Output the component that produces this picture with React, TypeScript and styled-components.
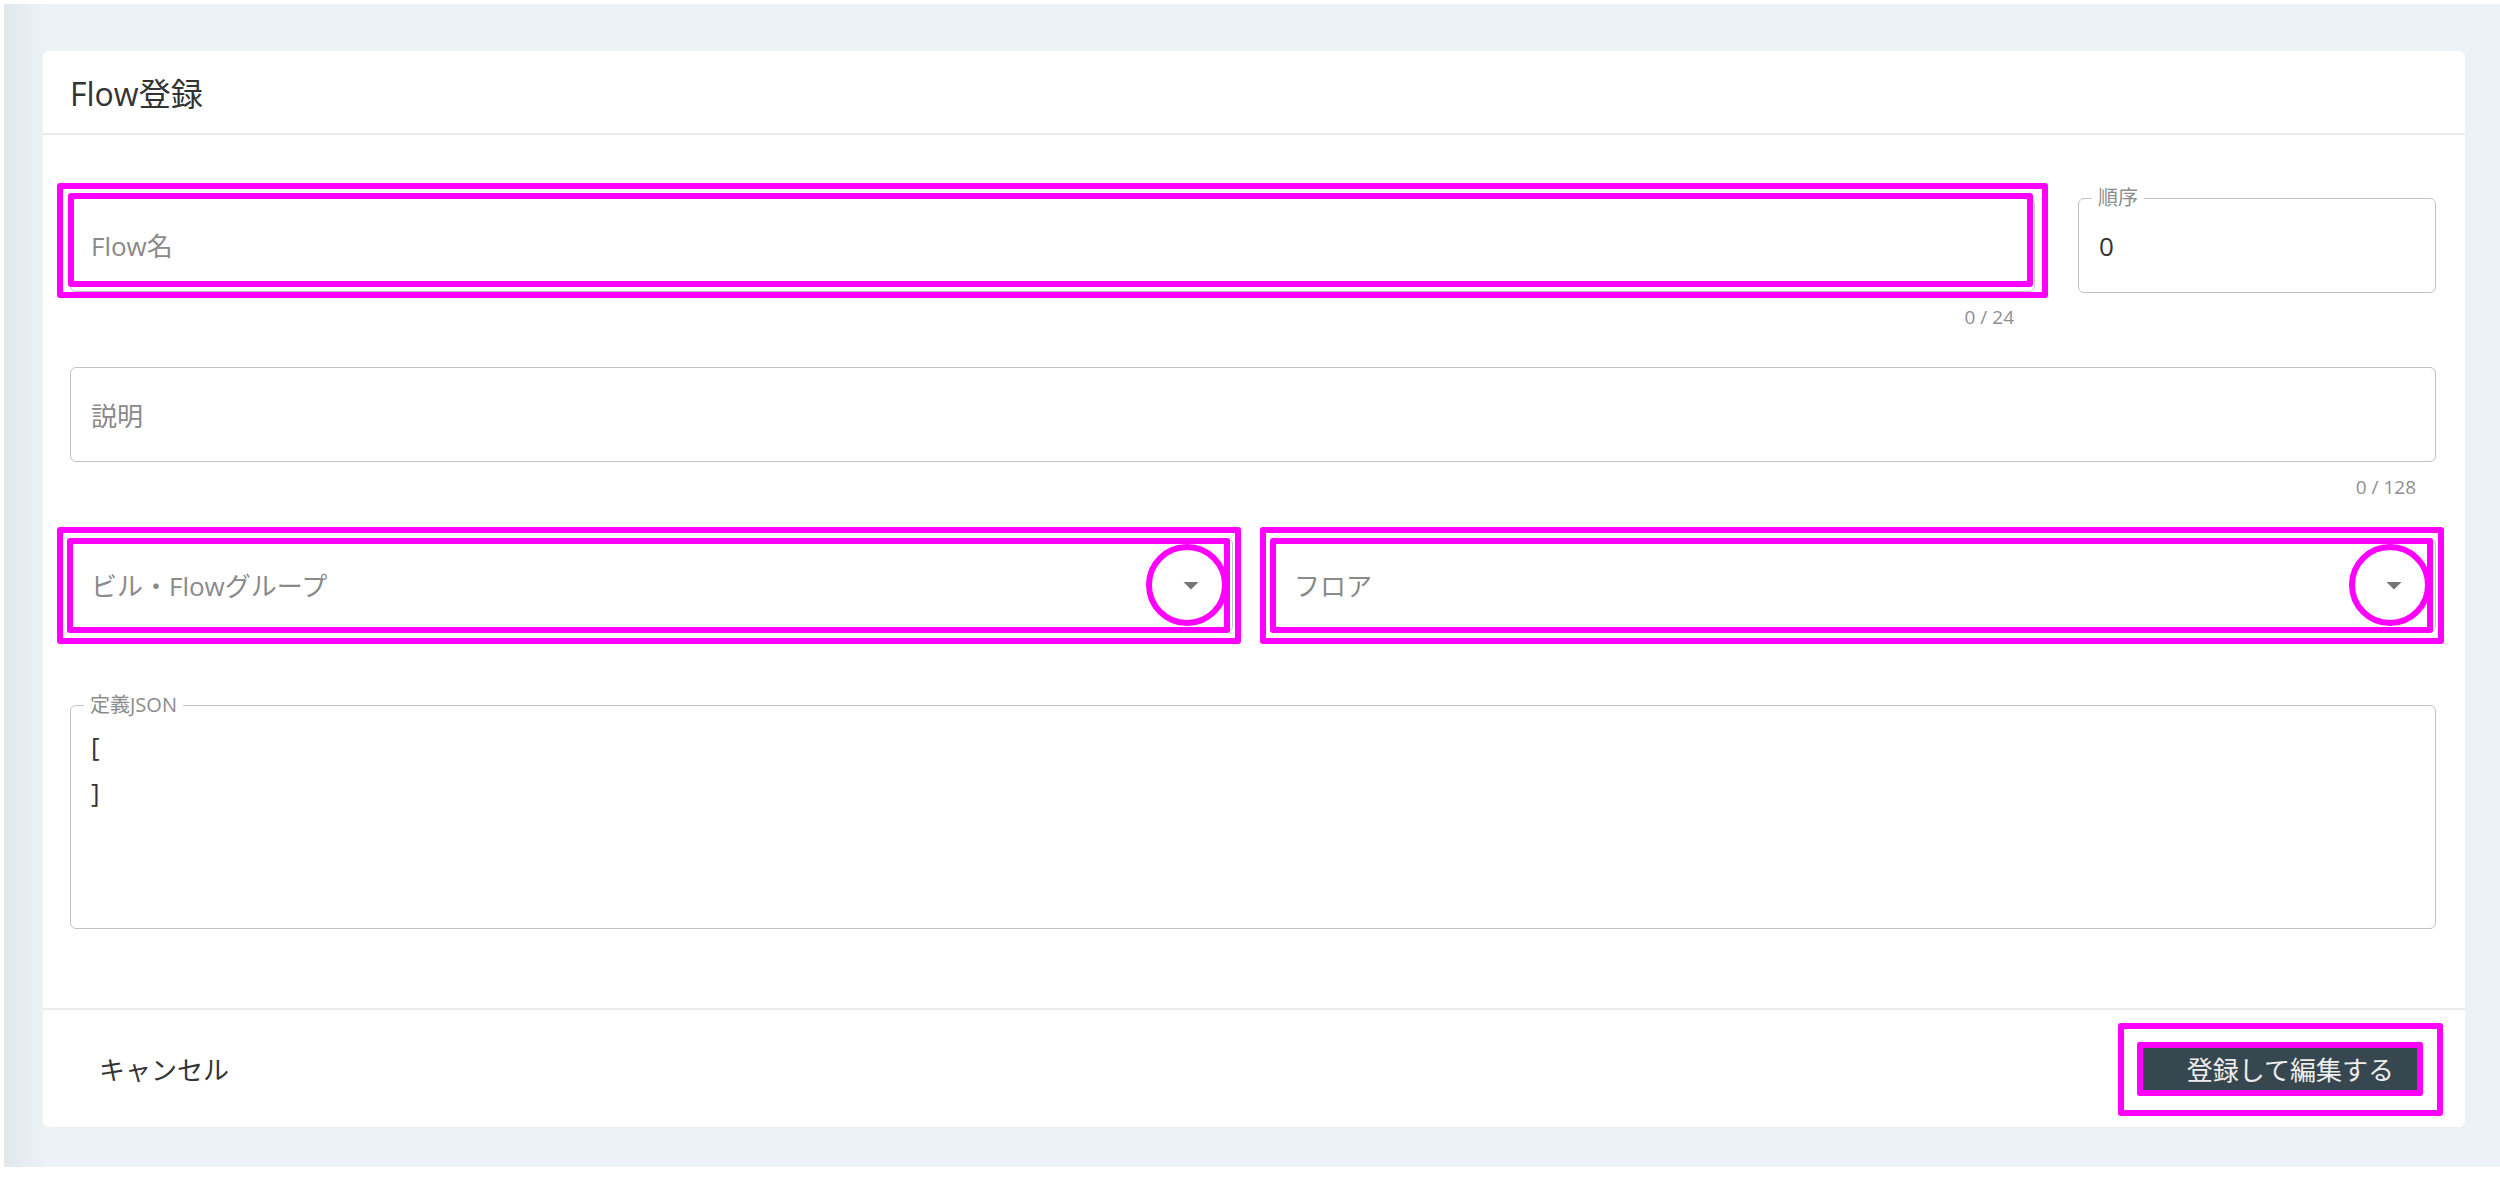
import React from 'react'
import styled, { createGlobalStyle } from 'styled-components'

type Inset = [number, number, number, number]

const GlobalStyle = createGlobalStyle`
  html, body {
    margin: 0;
    padding: 0;
    background: #ffffff;
  }
  body {
    font-family: "Open Sans", "Noto Sans CJK JP", sans-serif;
    color: #333333;
  }
  * {
    box-sizing: border-box;
  }
`

const Screen = styled('div')`
  width: 2500px;
  height: 1177px;
  padding: 4px 0 10px 4px;
`

const Backdrop = styled('main')`
  height: 1163px;
  padding: 47px 35px 0 39px;
  background: linear-gradient(to right, #e1e8ec 0, #ecf3f7 42px);
`

const Card = styled('section')`
  width: 2422px;
  height: 1076px;
  display: flex;
  flex-direction: column;
  background: #ffffff;
  border-radius: 6px;
  box-shadow: 0 0 0 1px #eef1f3;
`

const CardHeader = styled('header')`
  height: 84px;
  display: flex;
  align-items: center;
  padding: 0 27px;
  border-bottom: 2px solid #ebebeb;
`

const Title = styled('h1')`
  margin: 0;
  font-size: 32px;
  font-weight: 400;
  color: #333333;
`

const CardBody = styled('div')`
  flex: 1;
  display: flex;
  flex-direction: column;
  padding: 63px 29px 0 27px;
`

const Row = styled('div')<{ $columns: string; $gap: number; $top?: number }>`
  display: grid;
  grid-template-columns: ${(p) => p.$columns};
  column-gap: ${(p) => p.$gap}px;
  margin-top: ${(p) => p.$top ?? 0}px;
  align-items: start;
`

const Column = styled('div')`
  display: flex;
  flex-direction: column;
`

const Outlined = styled('div')<{ $height: number }>`
  position: relative;
  height: ${(p) => p.$height}px;
  display: flex;
  align-items: center;
  padding: 0 20px;
  border: 1.5px solid #c2c2c2;
  border-radius: 6px;
  background: #ffffff;
`

const SelectBox = styled(Outlined)`
  justify-content: space-between;
  padding: 0 4px 0 20px;
`

const Placeholder = styled('span')`
  font-size: 26px;
  color: #8a8a8a;
`

const Value = styled('span')`
  font-size: 26px;
  color: #333333;
`

const FloatLabel = styled('span')`
  position: absolute;
  top: -14px;
  left: 13px;
  padding: 0 6px;
  font-size: 20px;
  line-height: 26px;
  color: #8c8c8c;
  background: #ffffff;
`

const Helper = styled('div')<{ $right: number }>`
  height: 38px;
  padding: 12px ${(p) => p.$right}px 0 0;
  font-size: 19px;
  line-height: 26px;
  text-align: right;
  color: #8f8f8f;
`

const IconSlot = styled('span')<{ $marked?: boolean }>`
  width: 82px;
  height: 82px;
  display: flex;
  align-items: center;
  justify-content: center;
  border-radius: 50%;
  border: ${(p) => (p.$marked ? '6px solid #ff00ff' : 'none')};

  svg {
    margin-left: 7px;
  }
`

const JsonBox = styled(Outlined)`
  align-items: flex-start;
  padding: 17px 20px;
`

const JsonText = styled('div')`
  white-space: pre;
  font-size: 26px;
  line-height: 46px;
  color: #333333;
`

const CardFooter = styled('footer')`
  height: 119px;
  display: flex;
  align-items: center;
  justify-content: space-between;
  padding: 0 42px 0 56px;
  border-top: 2px solid #ebebeb;
`

const TextButton = styled('button')`
  padding: 0;
  border: none;
  background: none;
  font-family: inherit;
  font-size: 26px;
  color: #333333;
`

const PrimaryButton = styled('button')`
  height: 54px;
  padding: 0 29px 0 50px;
  border: none;
  border-radius: 4px;
  background: #37474f;
  font-family: inherit;
  font-size: 26px;
  color: #eeeeee;
`

// magenta annotation boxes drawn over the marked controls
const MarkWrap = styled('div')`
  position: relative;
`

const MarkFrame = styled('span')<{ $inset: Inset }>`
  position: absolute;
  top: ${(p) => p.$inset[0]}px;
  right: ${(p) => p.$inset[1]}px;
  bottom: ${(p) => p.$inset[2]}px;
  left: ${(p) => p.$inset[3]}px;
  border: 6px solid #ff00ff;
  border-radius: 3px;
  pointer-events: none;
`

const Marked: React.FC<{ inner: Inset; outer: Inset; children: React.ReactNode }> = ({
  inner,
  outer,
  children
}) => (
  <MarkWrap>
    {children}
    <MarkFrame $inset={inner} />
    <MarkFrame $inset={outer} />
  </MarkWrap>
)

const ArrowDown = () => (
  <svg width="36" height="36" viewBox="0 0 24 24" fill="#757575">
    <path d="M7 10l5 5 5-5z" />
  </svg>
)

const selectInner: Inset = [0, 3, -1, -3]
const selectOuter: Inset = [-11, -8, -12, -13]

const App: React.FC = () => {
  const selects = ['ビル・Flowグループ', 'フロア']

  return (
    <>
      <GlobalStyle />
      <Screen>
        <Backdrop>
          <Card>
            <CardHeader>
              <Title>Flow登録</Title>
            </CardHeader>

            <CardBody>
              <Row $columns="1fr 358px" $gap={43}>
                <Column>
                  <Marked inner={[-5, 2, 5, -2]} outer={[-15, -13, -6, -13]}>
                    <Outlined $height={94}>
                      <Placeholder>Flow名</Placeholder>
                    </Outlined>
                  </Marked>
                  <Helper $right={21}>0 / 24</Helper>
                </Column>
                <Outlined $height={95}>
                  <FloatLabel>順序</FloatLabel>
                  <Value>0</Value>
                </Outlined>
              </Row>

              <Row $columns="1fr" $gap={0} $top={37}>
                <Column>
                  <Outlined $height={95}>
                    <Placeholder>説明</Placeholder>
                  </Outlined>
                  <Helper $right={20}>0 / 128</Helper>
                </Column>
              </Row>

              <Row $columns="1fr 1fr" $gap={40} $top={38}>
                {selects.map((label) => (
                  <Marked key={label} inner={selectInner} outer={selectOuter}>
                    <SelectBox $height={94}>
                      <Placeholder>{label}</Placeholder>
                      <IconSlot $marked>
                        <ArrowDown />
                      </IconSlot>
                    </SelectBox>
                  </Marked>
                ))}
              </Row>

              <Row $columns="1fr" $gap={0} $top={73}>
                <JsonBox $height={224}>
                  <FloatLabel>定義JSON</FloatLabel>
                  <JsonText>{'[\n]'}</JsonText>
                </JsonBox>
              </Row>
            </CardBody>

            <CardFooter>
              <TextButton>キャンセル</TextButton>
              <Marked inner={[0, 0, 0, 0]} outer={[-19, -20, -20, -19]}>
                <PrimaryButton>登録して編集する</PrimaryButton>
              </Marked>
            </CardFooter>
          </Card>
        </Backdrop>
      </Screen>
    </>
  )
}

export default App
